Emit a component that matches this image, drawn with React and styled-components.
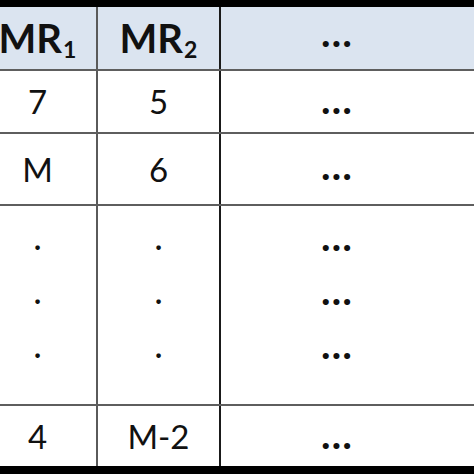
import styled, { createGlobalStyle } from "styled-components";

const GlobalStyle = createGlobalStyle`
  html, body {
    margin: 0;
    padding: 0;
    background: #fff;
    overflow: hidden;
  }
  * {
    box-sizing: border-box;
  }
`;

// row heights and where the "…" sits in each (bottom padding lifts it)
const rows = [
  { height: 64, header: true, lift: 13, cells: [["MR", "1"], ["MR", "2"]] },
  { height: 63, lift: 6, cells: ["7", "5"] },
  { height: 72, lift: 8, cells: ["M", "6"] },
  { height: 200, gap: true },
  { height: 60, last: true, lift: 5, cells: ["4", "M-2"] },
];

const lineColors = ["#5a5a5a", "#1a1a1a"];

const App = () => {
  return (
    <>
      <GlobalStyle />
      <Table>
        {rows.map((row, i) => (
          <Row key={i} $height={row.height} $last={row.last} $header={row.header}>
            {row.gap ? (
              <>
                {lineColors.map((color) => (
                  <Cell key={color} $line={color}>
                    <Stack $top={5}>
                      <Dot>.</Dot>
                      <Dot>.</Dot>
                      <Dot>.</Dot>
                    </Stack>
                  </Cell>
                ))}
                <Cell $wide>
                  <Stack $top={3}>
                    <More $stacked>…</More>
                    <More $stacked>…</More>
                    <More $stacked>…</More>
                  </Stack>
                </Cell>
              </>
            ) : (
              <>
                {row.cells.map((c, j) => (
                  <Cell key={j} $line={lineColors[j]}>
                    {row.header ? (
                      <HeadText>
                        {c[0]}
                        <Sub>{c[1]}</Sub>
                      </HeadText>
                    ) : (
                      <Value>{c}</Value>
                    )}
                  </Cell>
                ))}
                <Cell $wide>
                  <More $lift={row.lift}>…</More>
                </Cell>
              </>
            )}
          </Row>
        ))}
      </Table>
    </>
  );
};

export default App;

const Table = styled.div`
  display: flex;
  flex-direction: column;
  width: 497px;
  margin-left: -21px;
  border-top: 7px solid #000;
  border-bottom: 10px solid #000;
  font-family: Lato, "Open Sans", sans-serif;
  color: #111;
`;

const Row = styled.div`
  display: grid;
  grid-template-columns: 119px 123px 1fr;
  height: ${(p) => p.$height}px;
  background: ${(p) => (p.$header ? "#dbe4f0" : "#fff")};
  border-bottom: ${(p) => (p.$last ? "none" : "2px solid #5e5e5e")};
`;

const Cell = styled.div`
  display: flex;
  align-items: center;
  justify-content: center;
  padding-right: ${(p) => (p.$wide ? 24 : 0)}px;
  border-right: ${(p) => (p.$line ? `2px solid ${p.$line}` : "none")};
`;

const HeadText = styled.span`
  font-size: 40px;
  font-weight: 700;
  line-height: 1;
`;

const Sub = styled.sub`
  font-size: 23px;
  vertical-align: -5px;
  line-height: 0;
  margin-left: 1px;
`;

const Value = styled.span`
  font-size: 33px;
  line-height: 1;
`;

const More = styled.span`
  font-size: 40px;
  font-weight: 700;
  line-height: ${(p) => (p.$stacked ? "54px" : 1)};
  padding-bottom: ${(p) => p.$lift || 0}px;
`;

const Stack = styled.div`
  align-self: flex-start;
  display: flex;
  flex-direction: column;
  align-items: center;
  margin-top: ${(p) => p.$top}px;
`;

const Dot = styled.span`
  font-size: 30px;
  font-weight: 700;
  line-height: 54px;
`;
